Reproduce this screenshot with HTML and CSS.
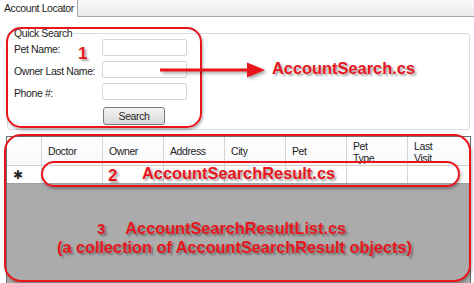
FILE: index.html
```html
<!DOCTYPE html>
<html>
<head>
<meta charset="utf-8">
<link rel="stylesheet" href="styles.css">
</head>
<body>
<div class="tabbar">
  <div class="tab">Account Locator</div>
  <div class="strip"></div>
</div>

<div class="group">
  <span class="legend">Quick Search</span>
  <div class="form">
    <span class="lbl">Pet Name:</span><span class="input"></span>
    <span class="lbl">Owner Last Name:</span><span class="input"></span>
    <span class="lbl">Phone #:</span><span class="input"></span>
    <span></span><span class="btn">Search</span>
  </div>
</div>

<div class="grid">
  <div class="hdr">
    <div class="c rh"></div>
    <div class="c">Doctor</div>
    <div class="c">Owner</div>
    <div class="c">Address</div>
    <div class="c">City</div>
    <div class="c">Pet</div>
    <div class="c two">Pet<br>Type</div>
    <div class="c two last">Last<br>Visit</div>
  </div>
  <div class="row">
    <div class="c rh"><span class="star">&#x2731;</span></div>
    <div class="c"></div>
    <div class="c"></div>
    <div class="c"></div>
    <div class="c"></div>
    <div class="c"></div>
    <div class="c"></div>
    <div class="c last"></div>
  </div>
  <div class="empty"></div>
</div>

<!-- annotation overlays -->
<div class="ring ring1"></div>
<div class="ring ring2"></div>
<div class="ring ring3"></div>
<span class="note n1">1</span>
<svg class="arrow" width="112" height="24" viewBox="0 0 112 24">
  <line x1="2" y1="10" x2="92" y2="10" stroke="#e8161c" stroke-width="3"/>
  <polygon points="89,2.5 107,10 89,17.5" fill="#e8161c"/>
</svg>
<span class="note cs1">AccountSearch.cs</span>
<span class="note n2">2</span>
<span class="note cs2">AccountSearchResult.cs</span>
<div class="note cs3">
  <div class="l1"><span class="n3">3</span>AccountSearchResultList.cs</div>
  <div class="l2">(a collection of AccountSearchResult objects)</div>
</div>
</body>
</html>
```

FILE: styles.css
```css
html, body {
  margin: 0;
  padding: 0;
}
body {
  position: relative;
  width: 474px;
  height: 283px;
  overflow: hidden;
  background: #ffffff;
  font-family: "Liberation Sans", Arial, sans-serif;
  font-size: 10.5px;
  letter-spacing: -0.4px;
  color: #1e1e1e;
}

.tabbar {
  display: flex;
  height: 17px;
}
.tab {
  width: 73px;
  padding: 3px 0 0 4px;
  background: #ffffff;
  line-height: 11px;
}
.strip {
  flex: 1;
  background: linear-gradient(#f9f9f9, #ebebeb);
  border-left: 1px solid #a8a8a8;
  border-bottom: 1px solid #a8a8a8;
}

.group {
  position: relative;
  margin: 16px 4px 0 7px;
  height: 95px;
  border: 1px solid #d8dde2;
  border-radius: 3px;
  box-sizing: content-box;
}
.legend {
  position: absolute;
  top: -7px;
  left: 5px;
  padding: 0 1px;
  background: #ffffff;
  line-height: 12px;
}
.form {
  display: grid;
  grid-template-columns: 88px 85px;
  grid-auto-rows: 17px;
  row-gap: 5px;
  padding: 5px 0 0 6px;
}
.lbl {
  display: flex;
  align-items: center;
  padding-top: 3px;
  line-height: 11px;
  white-space: nowrap;
}
.input {
  border: 1px solid #d4d6da;
  border-radius: 2px;
  background: #ffffff;
}
.btn {
  margin: 2px 0 0 1px;
  width: 60px;
  height: 16px;
  border: 1px solid #7a7a7a;
  border-radius: 3px;
  background: linear-gradient(#f4f4f4, #e6e6e6 50%, #d8d8d8);
  display: flex;
  align-items: center;
  justify-content: center;
  line-height: 11px;
}

.grid {
  margin: 6px 3px 0 6px;
  height: 150px;
  border: 1px solid #6e6e6e;
  background: #ababab;
  display: flex;
  flex-direction: column;
}
.hdr, .row {
  display: flex;
  background: #ffffff;
}
.hdr {
  height: 28px;
  background: linear-gradient(#ffffff, #f7f8fa);
  border-bottom: 1px solid #d0d0d0;
}
.row {
  height: 17px;
  border-bottom: 1px solid #a0a0a0;
}
.c {
  width: 61px;
  flex: none;
  box-sizing: border-box;
  border-right: 1px solid #d5d5d5;
  padding-left: 6px;
  display: flex;
  align-items: center;
  line-height: 12px;
  overflow: hidden;
}
.c.rh {
  width: 35px;
  padding-left: 6px;
}
.star {
  font-family: "DejaVu Sans", sans-serif;
  font-size: 12px;
  color: #222222;
}
.c.last {
  width: 62px;
  border-right: none;
}
.hdr .c.two {
  align-items: flex-start;
  padding-top: 3px;
}
.empty {
  flex: 1;
}

/* annotation overlays */
.ring {
  position: absolute;
  border: 2px solid #e8161c;
  box-shadow: 1px 2px 3px rgba(0, 0, 0, 0.3);
}
.ring1 {
  left: 6px;
  top: 27px;
  width: 192px;
  height: 97px;
  border-radius: 15px;
}
.ring2 {
  left: 41px;
  top: 161px;
  width: 415px;
  height: 22px;
  border-radius: 13px;
}
.ring3 {
  left: 4px;
  top: 134px;
  width: 463px;
  height: 144px;
  border-radius: 17px;
}
.note {
  position: absolute;
  color: #e8161c;
  font-weight: bold;
  letter-spacing: 0;
  text-shadow: 2px 2px 2px rgba(0, 0, 0, 0.35);
  white-space: nowrap;
}
.n1 {
  left: 78px;
  top: 44px;
  font-size: 17px;
}
.arrow {
  position: absolute;
  left: 158px;
  top: 60px;
  filter: drop-shadow(2px 2px 1.5px rgba(0, 0, 0, 0.35));
}
.cs1 {
  left: 272px;
  top: 59px;
  font-size: 16.4px;
}
.n2 {
  left: 108px;
  top: 166px;
  font-size: 17px;
}
.cs2 {
  left: 142px;
  top: 164px;
  font-size: 16.4px;
}
.cs3 {
  left: 57px;
  top: 219px;
  font-size: 16.3px;
  line-height: 19px;
}
.cs3 .l1 {
  padding-left: 40px;
}
.n3 {
  font-size: 15px;
  margin-right: 20px;
}
```
